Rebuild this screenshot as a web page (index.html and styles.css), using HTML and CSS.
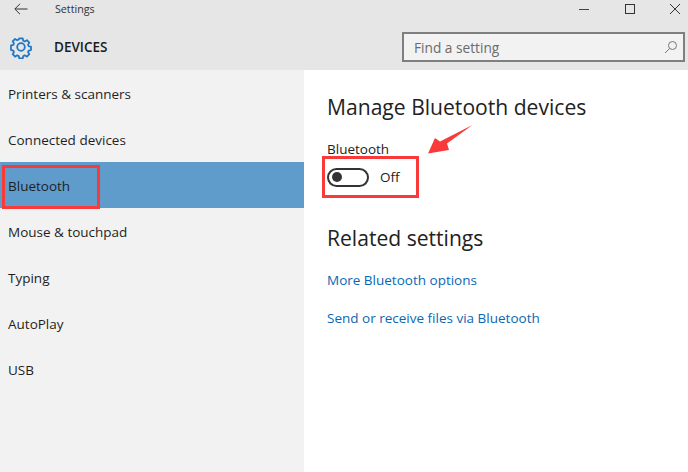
FILE: index.html
```html
<!DOCTYPE html>
<html lang="en">
<head>
<meta charset="utf-8">
<title>Settings</title>
<link rel="stylesheet" href="styles.css">
</head>
<body>
<div class="window">
  <header class="top">
    <div class="titlebar">
      <svg class="back" width="14" height="12" viewBox="0 0 14 12"><path d="M13.500 6H1M6 .8 .8 6 6 11.200" fill="none" stroke="#333" stroke-width="1"/></svg>
      <span class="title">Settings</span>
      <div class="controls">
        <svg width="12" height="12" viewBox="0 0 12 12"><path d="M1 6.500h10" stroke="#444" stroke-width="1"/></svg>
        <svg width="12" height="12" viewBox="0 0 12 12"><rect x="1.500" y="1.500" width="9" height="9" fill="none" stroke="#333" stroke-width="1"/></svg>
        <svg width="12" height="12" viewBox="0 0 12 12"><path d="M1 1l10 10M11 1 1 11" stroke="#333" stroke-width="1"/></svg>
      </div>
    </div>
    <div class="headbar">
      <svg class="gear" width="24" height="24" viewBox="0 0 24 24"><path d="M9.800 1.500h4.400l.6 2.900 2 .9 2.600-1.600 3 3-1.600 2.600.8 2 2.900.6v4.200l-2.900.6-.8 2 1.600 2.600-3 3-2.600-1.600-2 .8-.6 2.900H9.800l-.6-2.900-2-.8-2.600 1.600-3-3 1.600-2.600-.8-2-2.900-.6V10.300l2.900-.6.8-2L1.600 5.100l3-3L7.200 3.700l2-.9z" transform="translate(2.400 2.200) scale(.8)" fill="none" stroke="#1f77c4" stroke-width="2.200" stroke-linejoin="round"/><circle cx="12" cy="12" r="3.800" fill="none" stroke="#1f77c4" stroke-width="1.800"/></svg>
      <h1 class="section">DEVICES</h1>
      <div class="search">
        <span>Find a setting</span>
        <svg width="14" height="14" viewBox="0 0 14 14"><circle cx="8.500" cy="5.500" r="4" fill="none" stroke="#777" stroke-width="1"/><path d="M5.500 8.500 1 13" stroke="#777" stroke-width="1"/></svg>
      </div>
    </div>
  </header>
  <div class="body">
    <nav class="side">
      <a class="item">Printers &amp; scanners</a>
      <a class="item">Connected devices</a>
      <a class="item active">Bluetooth</a>
      <a class="item">Mouse &amp; touchpad</a>
      <a class="item">Typing</a>
      <a class="item">AutoPlay</a>
      <a class="item">USB</a>
    </nav>
    <main class="content">
      <h2 class="heading">Manage Bluetooth devices</h2>
      <div class="label">Bluetooth</div>
      <div class="toggle-row">
        <span class="toggle"><span class="knob"></span></span>
        <span class="state">Off</span>
      </div>
      <h2 class="heading related">Related settings</h2>
      <a class="link first">More Bluetooth options</a>
      <a class="link">Send or receive files via Bluetooth</a>
    </main>
  </div>
  <div class="mark mark-nav"></div>
  <div class="mark mark-toggle"></div>
  <svg class="arrow" width="46" height="30" viewBox="0 0 46 30"><path d="M44.500 0 19 18.500 21 25 0 28.500 7 13 12 16.500z" fill="#f93a3a"/></svg>
</div>
</body>
</html>
```
FILE: styles.css
```css
html, body { margin: 0; padding: 0; }
body { width: 688px; height: 472px; overflow: hidden; background: #fff; font-family: "Open Sans", "Noto Sans", sans-serif; color: #1a1a1a; }
.window { position: relative; width: 688px; height: 472px; display: flex; flex-direction: column; }
.top { background: #e6e6e6; height: 70px; flex: none; }
.titlebar { height: 18px; display: flex; align-items: center; padding-left: 14px; }
.back { flex: none; }
.title { margin-left: 27px; font-size: 10.700px; color: #333; }
.controls { margin-left: auto; display: flex; gap: 33px; padding-right: 7px; align-items: center; }
.controls svg { display: block; }
.controls svg:first-child { margin-right: 1px; }
.headbar { height: 52px; box-sizing: border-box; padding-top: 6px; display: flex; align-items: center; padding-left: 9px; }
.gear { flex: none; }
.section { margin: 0 0 0 21px; font-size: 13.500px; font-weight: 600; color: #1a1a1a; }
.search { margin-left: auto; margin-right: 3px; width: 283px; height: 30px; box-sizing: border-box; border: 2px solid #7f7f7f; background: #f2f2f2; display: flex; align-items: center; justify-content: space-between; padding: 0 5px 0 10px; font-size: 13.700px; color: #6b6b6b; }
.body { flex: 1; display: flex; min-height: 0; }
.side { width: 304px; flex: none; background: #f2f2f2; display: flex; flex-direction: column; }
.item { height: 46px; display: flex; align-items: center; padding: 2px 0 0 8px; font-size: 13.500px; color: #1f1f1f; box-sizing: border-box; }
.active { background: #5f9bcb; }
.content { flex: 1; padding: 23px 0 0 23px; }
.heading { margin: 0; font-size: 21.100px; font-weight: 400; line-height: 28px; color: #222; }
.label { margin-top: 19px; font-size: 13.500px; line-height: 18px; color: #222; }
.toggle-row { display: flex; align-items: center; margin-top: 9px; height: 20px; }
.toggle { width: 42px; height: 19px; box-sizing: border-box; border: 2px solid #333; border-radius: 10px; display: flex; align-items: center; padding-left: 3px; }
.knob { width: 10px; height: 10px; border-radius: 50%; background: #333; }
.state { margin-left: 11px; font-size: 13.500px; color: #222; }
.related { margin-top: 37px; }
.link { display: block; font-size: 13.500px; line-height: 18px; color: #0a67b5; margin-top: 20px; }
.first { margin-top: 19px; }
.mark { position: absolute; box-sizing: border-box; border: 3px solid #f93a3a; }
.mark-nav { left: 2px; top: 165px; width: 98px; height: 44px; }
.mark-toggle { left: 322px; top: 156px; width: 97px; height: 42px; }
.arrow { position: absolute; left: 428px; top: 125px; }
```
